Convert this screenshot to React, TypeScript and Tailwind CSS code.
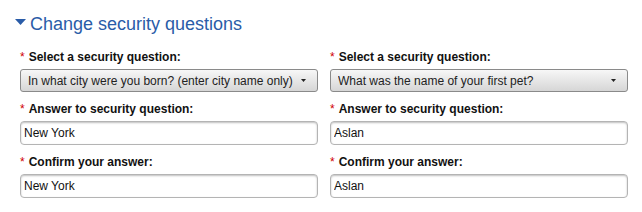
import { useState } from "react";

type Field = {
  question: string;
  options: string[];
  answer: string;
  confirm: string;
};

const initialFields: Field[] = [
  {
    question: "In what city were you born? (enter city name only)",
    options: [
      "In what city were you born? (enter city name only)",
      "What was the name of your first pet?",
      "What is your mother's maiden name?",
    ],
    answer: "New York",
    confirm: "New York",
  },
  {
    question: "What was the name of your first pet?",
    options: [
      "What was the name of your first pet?",
      "In what city were you born? (enter city name only)",
      "What is your mother's maiden name?",
    ],
    answer: "Aslan",
    confirm: "Aslan",
  },
];

function Label({ text }: { text: string }) {
  return (
    <label className="block h-[14px] text-[12px] leading-[14px] font-bold text-[#111]">
      <span className="mr-[4px] font-normal text-[#d00000]">*</span>
      {text}
    </label>
  );
}

function TextField({
  value,
  onChange,
}: {
  value: string;
  onChange: (v: string) => void;
}) {
  return (
    <input
      type="text"
      value={value}
      onChange={(e) => onChange(e.target.value)}
      className="mt-[5px] block h-[24px] w-full rounded-[4px] border border-[#b4b4b4] bg-white px-[3px] text-[12px] text-[#111] shadow-[inset_0_1px_2px_rgba(0,0,0,0.25)] outline-none"
    />
  );
}

export default function App() {
  const [fields, setFields] = useState<Field[]>(initialFields);
  const [open, setOpen] = useState(true);

  function update(index: number, patch: Partial<Field>) {
    setFields((prev) =>
      prev.map((f, i) => (i === index ? { ...f, ...patch } : f)),
    );
  }

  return (
    <div className="h-[212px] w-[642px] bg-white font-['Liberation_Sans',Arial,sans-serif]">
      <button
        type="button"
        onClick={() => setOpen(!open)}
        className="flex items-center pt-[12px] pl-[15px] text-[18px] leading-[24px] text-[#2a5ca8]"
      >
        <svg width="11" height="6" viewBox="0 0 11 6" className="mr-[4px] mt-[-4px]">
          <polygon points="0,0 11,0 5.5,6" fill="#2a5ca8" />
        </svg>
        Change security questions
      </button>

      {open && (
        <div className="mt-[14px] grid grid-cols-[298px_298px] gap-x-[12px] pl-[20px]">
          {fields.map((field, i) => (
            <div key={i} className="flex flex-col">
              <Label text="Select a security question:" />
              <div className="relative mt-[5px] h-[23px]">
                <select
                  value={field.question}
                  onChange={(e) => update(i, { question: e.target.value })}
                  className="block h-[23px] w-full appearance-none rounded-[3px] border border-[#8a8a8a] bg-gradient-to-b from-[#f7f7f7] to-[#d6d6d6] pr-[24px] pl-[7px] text-[12px] text-[#222] outline-none"
                >
                  {field.options.map((o) => (
                    <option key={o}>{o}</option>
                  ))}
                </select>
                <svg
                  width="5"
                  height="3"
                  viewBox="0 0 5 3"
                  className="pointer-events-none absolute top-[10px] right-[12px]"
                >
                  <polygon points="0,0 5,0 2.5,3" fill="#222" />
                </svg>
              </div>

              <div className="mt-[10px]">
                <Label text="Answer to security question:" />
                <TextField
                  value={field.answer}
                  onChange={(v) => update(i, { answer: v })}
                />
              </div>

              <div className="mt-[10px]">
                <Label text="Confirm your answer:" />
                <TextField
                  value={field.confirm}
                  onChange={(v) => update(i, { confirm: v })}
                />
              </div>
            </div>
          ))}
        </div>
      )}
    </div>
  );
}
